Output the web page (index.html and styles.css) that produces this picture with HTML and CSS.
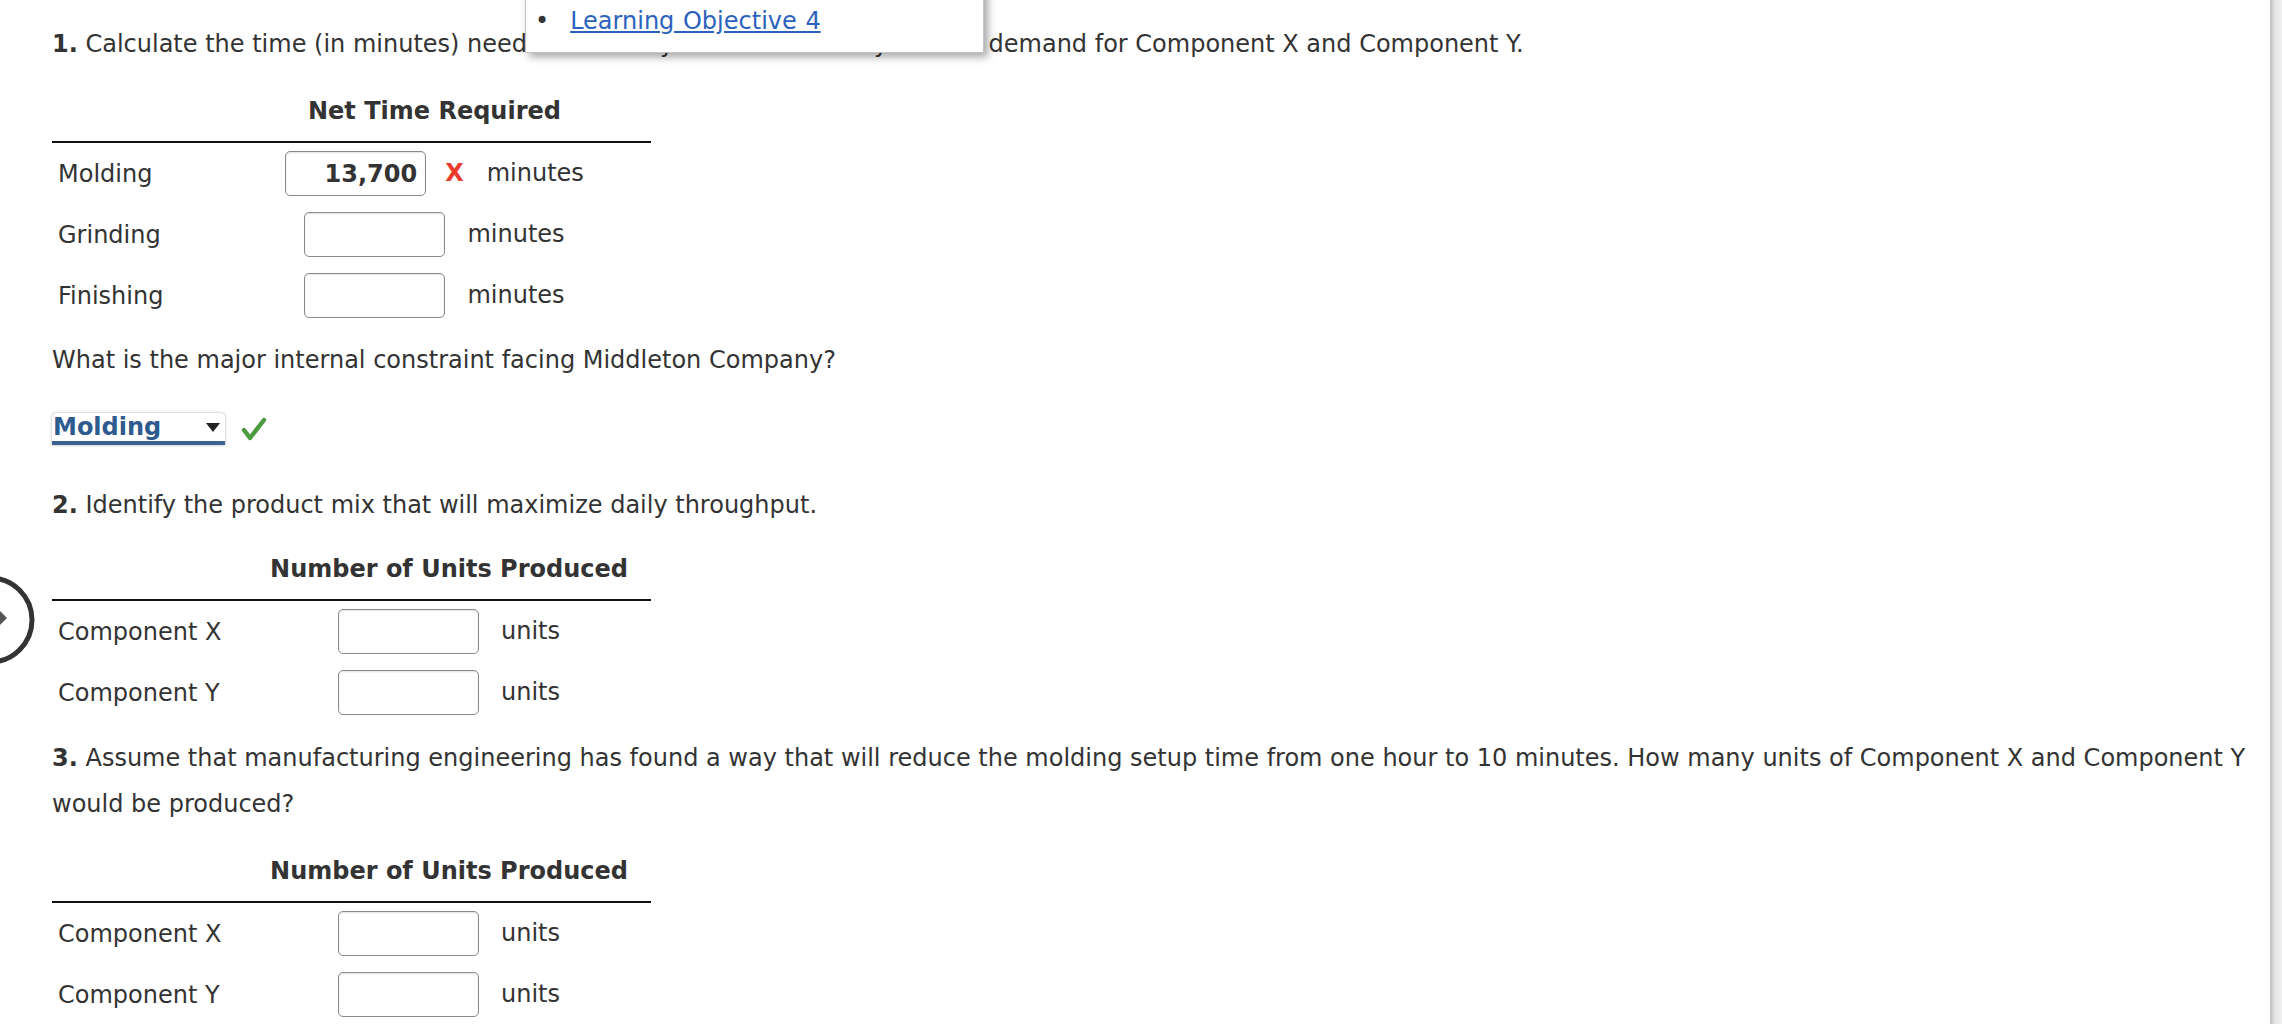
FILE: index.html
```html
<!DOCTYPE html>
<html lang="en">
<head>
  <meta charset="UTF-8" />
  <title>Middleton Company</title>
  <link rel="stylesheet" href="styles.css">
</head>
<body>
  <div class="page">
    <main class="content">
      <p class="ask"><b>1.</b> Calculate the time (in minutes) needed each day to meet the daily market demand for Component X and Component Y.</p>

      <div class="popup">
        <ul>
          <li><a href="#">Learning Objective 4</a></li>
        </ul>
      </div>

      <table class="grid grid-time">
        <colgroup><col class="c-time"><col></colgroup>
        <thead>
          <tr><th></th><th>Net Time Required</th></tr>
        </thead>
        <tbody>
          <tr>
            <td>Molding</td>
            <td><input class="num" type="text" value="13,700"><span class="wrong">X</span>minutes</td>
          </tr>
          <tr>
            <td>Grinding</td>
            <td><input class="num" type="text">minutes</td>
          </tr>
          <tr>
            <td>Finishing</td>
            <td><input class="num" type="text">minutes</td>
          </tr>
        </tbody>
      </table>

      <p class="ask ask-q">What is the major internal constraint facing Middleton Company?</p>

      <div class="pick">
        <span class="select-wrap">
          <select>
            <option>Molding</option>
            <option>Grinding</option>
            <option>Finishing</option>
          </select>
        </span>
        <svg class="ok" width="26" height="24" viewBox="0 0 26 24"><path d="M3 13 L9 21 L23 3" fill="none" stroke="#4c9a3e" stroke-width="4.4" stroke-linecap="round" stroke-linejoin="round"/></svg>
      </div>

      <p class="ask ask-2"><b>2.</b> Identify the product mix that will maximize daily throughput.</p>

      <table class="grid grid-units">
        <colgroup><col class="c-units"><col></colgroup>
        <thead>
          <tr><th></th><th>Number of Units Produced</th></tr>
        </thead>
        <tbody>
          <tr>
            <td>Component X</td>
            <td><input class="num" type="text">units</td>
          </tr>
          <tr>
            <td>Component Y</td>
            <td><input class="num" type="text">units</td>
          </tr>
        </tbody>
      </table>

      <p class="ask ask-3"><b>3.</b> Assume that manufacturing engineering has found a way that will reduce the molding setup time from one hour to 10 minutes. How many units of Component X and Component Y would be produced?</p>

      <table class="grid grid-units grid-last">
        <colgroup><col class="c-units"><col></colgroup>
        <thead>
          <tr><th></th><th>Number of Units Produced</th></tr>
        </thead>
        <tbody>
          <tr>
            <td>Component X</td>
            <td><input class="num" type="text">units</td>
          </tr>
          <tr>
            <td>Component Y</td>
            <td><input class="num" type="text">units</td>
          </tr>
        </tbody>
      </table>
    </main>

    <div class="edge"></div>

    <svg class="nav-back" width="40" height="100" viewBox="0 0 40 100">
      <circle cx="-10" cy="50" r="42" fill="none" stroke="#333" stroke-width="5"/>
      <path d="M0 41 L7 48 L0 55 Z" fill="#555"/>
    </svg>
  </div>
</body>
</html>
```

FILE: styles.css
```css
body {
  margin: 0;
  font-family: "DejaVu Sans", Verdana, sans-serif;
  font-size: 24px;
  color: #333;
  background: #fff;
}

.page {
  display: flex;
  min-height: 1024px;
  position: relative;
}

.content {
  flex: 1;
  position: relative;
  padding: 21px 0 0 52px;
}

.edge {
  width: 12px;
  background: linear-gradient(to right, #bdbdbd, #e4e4e4 40%, #efefef);
}

.ask {
  margin: 0;
  line-height: 46px;
}

.ask-q {
  margin-top: 11px;
}

.ask-2 {
  margin-top: 30px;
}

.ask-3 {
  margin-top: 12px;
}

/* learning objective popup */
.popup {
  position: absolute;
  left: 525px;
  top: -40px;
  width: 459px;
  height: 93px;
  box-sizing: border-box;
  background: #fff;
  border: 1px solid #c4c4c4;
  box-shadow: 4px 4px 8px rgba(0, 0, 0, 0.35);
}

.popup ul {
  margin: 0;
  padding: 45px 0 0 9px;
  list-style: none;
}

.popup li {
  line-height: 30px;
  word-spacing: 1px;
}

.popup li::before {
  content: "\2022";
  color: #333;
  margin-right: 21px;
}

.popup a {
  color: #2b62bd;
  text-decoration: underline;
}

/* answer tables */
.grid {
  border-collapse: collapse;
  table-layout: fixed;
  width: 599px;
  margin-top: 21px;
}

.grid-units {
  margin-top: 18px;
}

.grid-last {
  margin-top: 21px;
}

.c-time {
  width: 166px;
}

.c-units {
  width: 195px;
}

.grid th {
  font-weight: bold;
  line-height: 46px;
  padding: 0 0 7px;
  text-align: center;
  border-bottom: 2px solid #111;
}

.grid td {
  height: 61px;
  padding: 0;
  vertical-align: middle;
  white-space: nowrap;
}

.grid td:first-child {
  padding-left: 6px;
}

.grid td:last-child {
  text-align: center;
}

.num {
  box-sizing: border-box;
  width: 141px;
  height: 45px;
  margin: 0 22px 0 0;
  padding: 0 8px;
  vertical-align: middle;
  border: 1px solid #8a8a8a;
  border-radius: 5px;
  box-shadow: inset 0 1px 2px rgba(0, 0, 0, 0.12);
  font: bold 24px "DejaVu Sans", Verdana, sans-serif;
  color: #333;
  text-align: right;
}

.wrong {
  color: #ec3a2e;
  font-weight: bold;
  margin: 0 23px 0 -3px;
}

/* constraint dropdown */
.pick {
  display: flex;
  align-items: center;
  gap: 16px;
  height: 46px;
  margin-top: 23px;
}

.select-wrap {
  position: relative;
  display: inline-block;
}

.select-wrap select {
  appearance: none;
  -webkit-appearance: none;
  width: 173px;
  height: 32px;
  padding: 0 0 0 1px;
  border: none;
  border-bottom: 4px solid #3b6391;
  border-radius: 5px 5px 0 0;
  background: #fff;
  box-shadow: 0 0 3px rgba(0, 0, 0, 0.35);
  font: bold 24px "DejaVu Sans", Verdana, sans-serif;
  color: #2e5b8f;
}

.select-wrap::after {
  content: "";
  position: absolute;
  right: 5px;
  top: 10px;
  border-left: 7px solid transparent;
  border-right: 7px solid transparent;
  border-top: 9px solid #222;
  pointer-events: none;
}

.ok {
  display: block;
}

.nav-back {
  position: absolute;
  left: 0;
  top: 570px;
}
```
